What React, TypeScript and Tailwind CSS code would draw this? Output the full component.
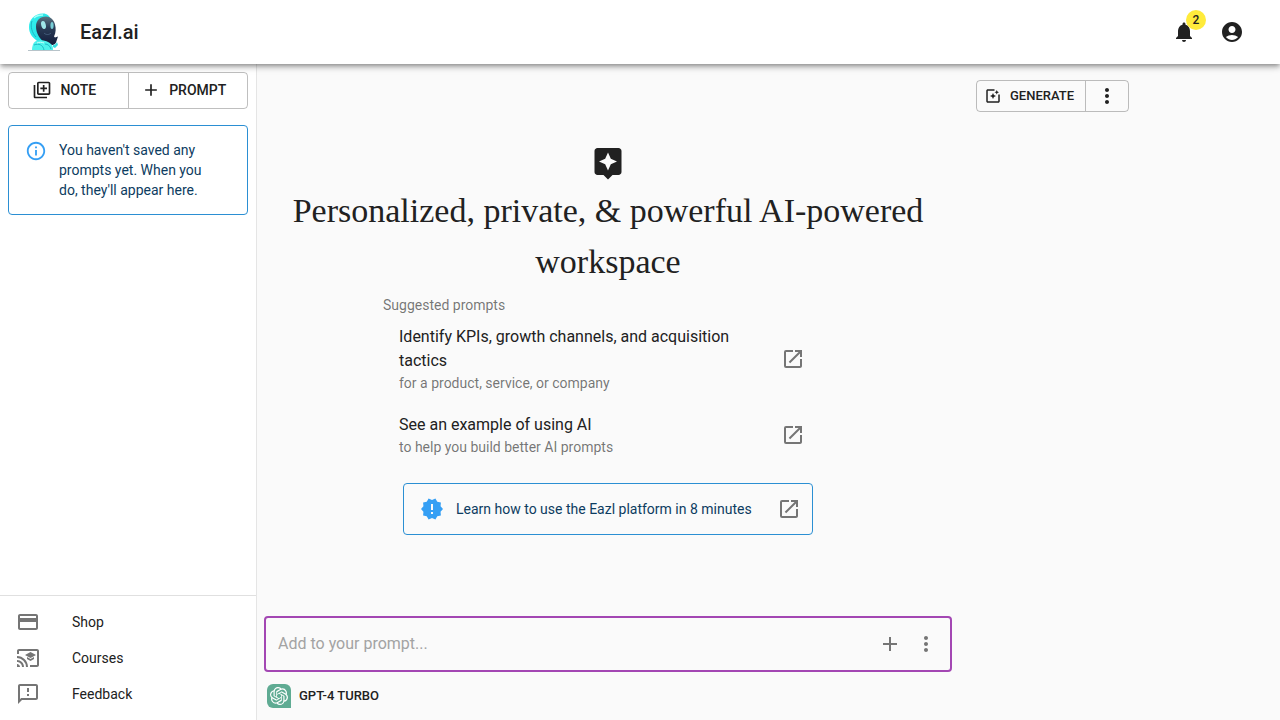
import React, { useState } from "react";
import {
  MdAccountCircle,
  MdAdd,
  MdAssistant,
  MdCastForEducation,
  MdInfoOutline,
  MdMoreVert,
  MdNewReleases,
  MdNotifications,
  MdOpenInNew,
  MdOutlineFeedback,
  MdOutlineLibraryAdd,
  MdPayment,
  MdPhotoFilter,
} from "react-icons/md";
import { SiOpenai } from "react-icons/si";

type Suggestion = {
  title: string;
  subtitle: string;
};

const suggestions: Suggestion[] = [
  {
    title: "Identify KPIs, growth channels, and acquisition tactics",
    subtitle: "for a product, service, or company",
  },
  {
    title: "See an example of using AI",
    subtitle: "to help you build better AI prompts",
  },
];

const links = [
  { label: "Shop", icon: MdPayment },
  { label: "Courses", icon: MdCastForEducation },
  { label: "Feedback", icon: MdOutlineFeedback },
];

const Logo = () => (
  <svg viewBox="0 0 40 40" className="size-10" aria-hidden="true">
    <defs>
      <linearGradient id="shell" x1="0" y1="0" x2="1" y2="1">
        <stop offset="0" stopColor="#35f0ee" />
        <stop offset="1" stopColor="#1fdfe4" />
      </linearGradient>
      <linearGradient id="visor" x1="0" y1="0" x2="0" y2="1">
        <stop offset="0" stopColor="#5a7482" />
        <stop offset="0.4" stopColor="#2a3c56" />
        <stop offset="1" stopColor="#131c3c" />
      </linearGradient>
    </defs>
    <path
      d="M19 1.5C10 1.5 5 8 5 15c0 6 3 10 7 13l3 3 6-1 6-22C26 4 23 1.5 19 1.5z"
      fill="url(#shell)"
    />
    <path d="M8 9c-2 5 0 12 4 16" fill="none" stroke="#1cb4c4" strokeWidth="1" />
    <path d="M10 6c3-3 6-3 9-3" fill="none" stroke="#a4fff8" strokeWidth="1.5" />
    <path
      d="M22 4.500c-6 0-10 4-10 10 0 7 4 13 9 16l5 2c3 1 5 0 6-2l2-6-3 1-1-1c2-4 2-8 1-12-1-4-4-8-9-8z"
      fill="url(#visor)"
    />
    <ellipse cx="19.5" cy="13" rx="2.300" ry="4" fill="#9fe6e8" transform="rotate(-14 19.5 13)" />
    <ellipse cx="28" cy="13.5" rx="1.600" ry="3.500" fill="#78cdd6" />
    <path d="M20 21c2 2 5 2 7 0" fill="none" stroke="#46607e" strokeWidth="1" />
    <path
      d="M12 29c5-2 12 0 15 3 2 2 2 4 2 6.500H8c0-4 1-8 4-9.500z"
      fill="#4df2ec"
    />
    <path d="M10 33c5-2 9 0 10 5M21 32c3 0 5 2 6 5" fill="none" stroke="#1bbcc8" strokeWidth="1" />
    <path d="M13 31c2-1 5-1 7 0" fill="none" stroke="#c8fffa" strokeWidth="1" />
    <path d="M29 33c2 0 3-1 4-3l1 3-3 3-2-1z" fill="#39dce0" />
    <path d="M4 38.5h32" stroke="#b7c3c9" strokeWidth="1" />
  </svg>
);

const Header = () => (
  <header className="relative z-10 flex h-16 shrink-0 items-center bg-white px-6 shadow-[0_2px_4px_-1px_rgba(0,0,0,0.3),0_4px_5px_0_rgba(0,0,0,0.16),0_1px_10px_0_rgba(0,0,0,0.12)]">
    <Logo />
    <h1 className="ml-4 flex-1 text-xl font-medium">Eazl.ai</h1>
    <button aria-label="Notifications" className="relative p-3">
      <MdNotifications size={24} />
      <span className="absolute top-0.5 right-0.5 flex size-5 items-center justify-center rounded-full bg-[#ffeb3b] text-xs font-medium">
        2
      </span>
    </button>
    <button aria-label="Account" className="p-3">
      <MdAccountCircle size={24} />
    </button>
  </header>
);

const Sidebar = () => (
  <aside className="flex w-[257px] shrink-0 flex-col border-r border-black/10 bg-white">
    <div className="flex-1 p-2">
      <div className="flex h-[37px] rounded border border-black/25 text-sm font-medium">
        <button className="flex flex-1 items-center justify-center gap-2 border-r border-black/25 pr-2 pb-0.5">
          <MdOutlineLibraryAdd size={20} />
          NOTE
        </button>
        <button className="flex flex-1 items-center justify-center gap-2 pr-2 pb-0.5">
          <MdAdd size={20} />
          PROMPT
        </button>
      </div>
      <div
        role="status"
        className="mt-4 flex gap-3 rounded border border-[#2b8fd3] py-3.5 pr-8 pl-4 text-sm text-[#0d3c61]"
      >
        <MdInfoOutline size={22} className="shrink-0 text-[#359ff4]" />
        <p className="flex-1">
          You haven't saved any prompts yet. When you do, they'll appear here.
        </p>
      </div>
    </div>
    <nav className="border-t border-black/12 py-2">
      {links.map(({ label, icon: Icon }) => (
        <a key={label} href="#" className="flex h-9 items-center gap-8 px-4 text-sm">
          <Icon size={24} className="text-[#757575]" />
          {label}
        </a>
      ))}
    </nav>
  </aside>
);

const SuggestionRow = ({ suggestion }: { suggestion: Suggestion }) => (
  <li className="flex items-center py-2.5 pr-5 pl-4">
    <div className="flex-1">
      <p>{suggestion.title}</p>
      <p className="text-sm text-black/55">{suggestion.subtitle}</p>
    </div>
    <button aria-label={`Open ${suggestion.title}`} className="p-2 text-[#757575]">
      <MdOpenInNew size={24} />
    </button>
  </li>
);

const Welcome = () => (
  <section className="flex flex-1 flex-col items-center pt-[81px]">
    <MdAssistant size={36} />
    <h2 className="mt-1 text-center font-['Liberation_Serif',serif] text-[34px] leading-[51px]">
      Personalized, private, &amp; powerful AI-powered workspace
    </h2>
    <div className="mt-2 w-full max-w-[450px]">
      <h3 className="text-sm text-black/55">Suggested prompts</h3>
      <ul>
        {suggestions.map((suggestion) => (
          <SuggestionRow key={suggestion.title} suggestion={suggestion} />
        ))}
      </ul>
      <div className="mx-5 mt-4 flex h-[52px] items-center rounded border border-[#2b8fd3] pr-[3px] pl-4 text-sm text-[#0d3c61]">
        <MdNewReleases size={24} className="mr-3 text-[#359ff4]" />
        <p className="flex-1">Learn how to use the Eazl platform in 8 minutes</p>
        <button aria-label="Open tutorial" className="p-2 text-[#757575]">
          <MdOpenInNew size={24} />
        </button>
      </div>
    </div>
  </section>
);

const PromptBar = () => {
  const [prompt, setPrompt] = useState("");
  return (
    <footer className="pb-3">
      <div className="flex h-14 items-center gap-3 rounded border-2 border-[#a347b3] px-3 text-[#757575]">
        <input
          aria-label="Prompt"
          value={prompt}
          onChange={(e) => setPrompt(e.target.value)}
          placeholder="Add to your prompt..."
          className="min-w-0 flex-1 text-black/87 outline-none placeholder:text-[#a3a3a3]"
        />
        <button aria-label="Add">
          <MdAdd size={24} />
        </button>
        <button aria-label="Prompt options">
          <MdMoreVert size={24} />
        </button>
      </div>
      <button className="mt-3 ml-[3px] flex items-center gap-2 text-[13px] font-medium">
        <span className="flex size-6 items-center justify-center rounded-md rounded-br-none bg-[#5fab93] text-white">
          <SiOpenai size={18} />
        </span>
        GPT-4 TURBO
      </button>
    </footer>
  );
};

const App = () => {
  return (
    <div className="flex h-screen flex-col bg-[#fafafa] font-[Roboto,sans-serif] text-[#212121]">
      <Header />
      <div className="flex min-h-0 flex-1">
        <Sidebar />
        <main className="flex min-w-0 flex-1 flex-col pr-2 pl-[7px]">
          <Welcome />
          <PromptBar />
        </main>
        <aside className="w-80 shrink-0 p-4">
          <div className="inline-flex h-8 rounded border border-black/25 text-[13px] font-medium">
            <button className="flex items-center gap-2 border-r border-black/25 pr-[11px] pl-[7px]">
              <MdPhotoFilter size={18} />
              GENERATE
            </button>
            <button aria-label="More actions" className="px-[9px]">
              <MdMoreVert size={24} />
            </button>
          </div>
        </aside>
      </div>
    </div>
  );
};

export default App;
